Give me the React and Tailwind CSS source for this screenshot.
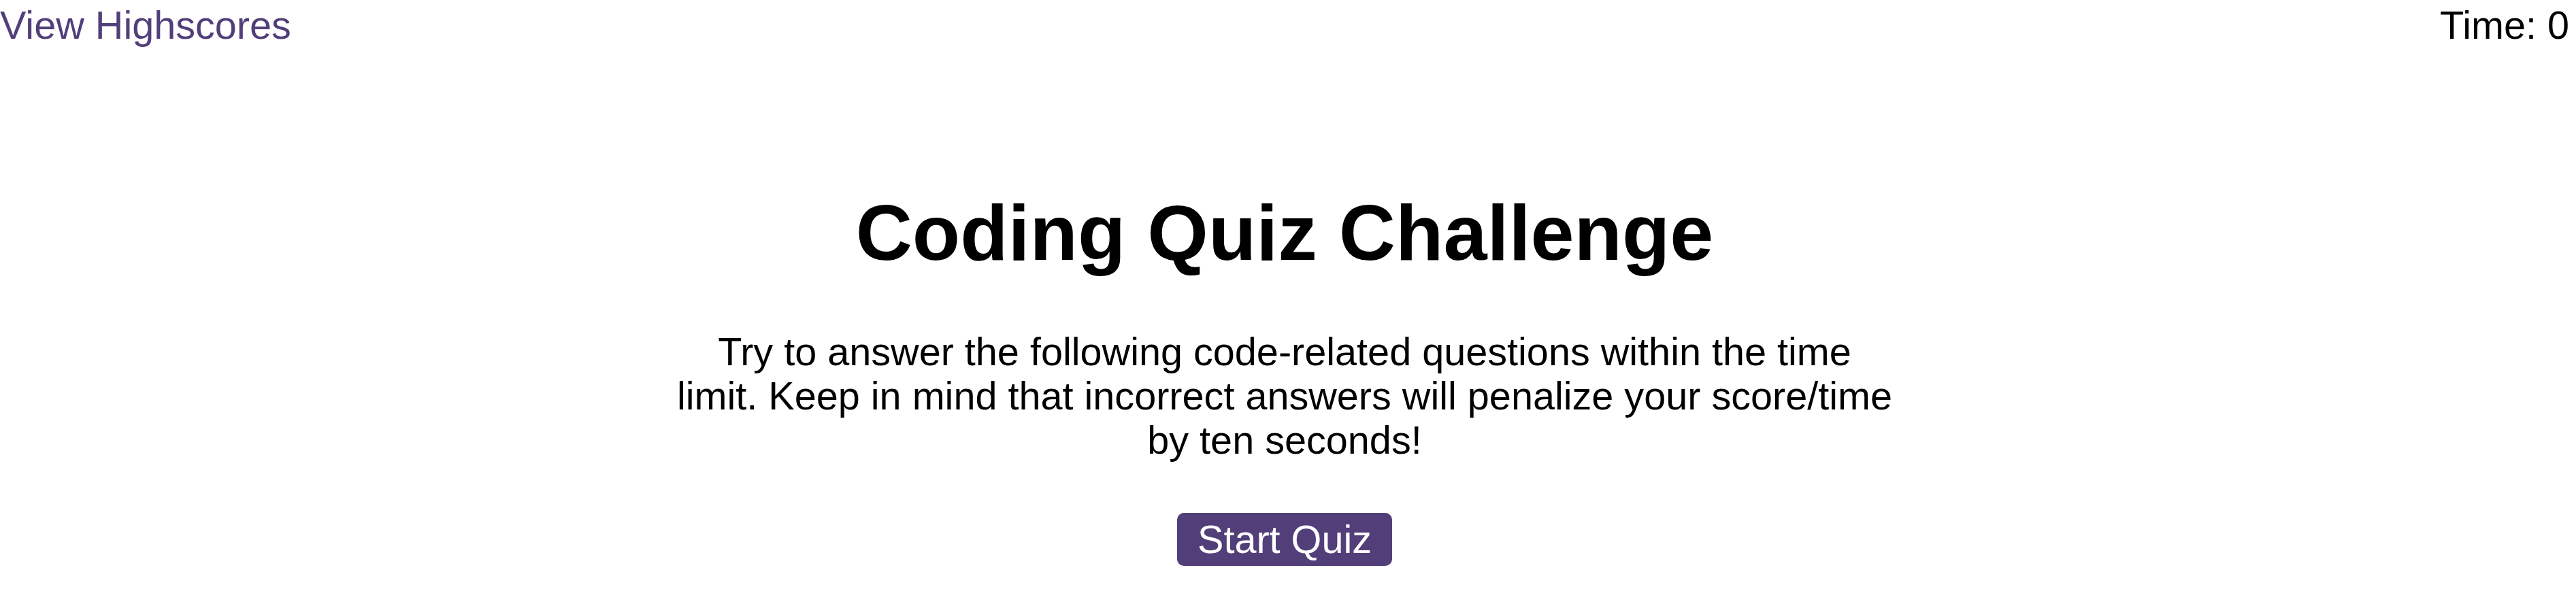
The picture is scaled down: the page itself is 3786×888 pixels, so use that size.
export default function App() {
  return (
    <div className="min-h-screen bg-white pr-[10px] text-black font-['Liberation_Sans',Arial,sans-serif]">
      <header className="flex justify-between items-start pt-[4px] text-[57.6px] leading-[66px]">
        <a href="#" className="text-[#523f7a]">
          View Highscores
        </a>
        <div>Time: 0</div>
      </header>

      <main className="flex flex-col items-center text-center mt-[206px]">
        <h1 className="text-[115.2px] leading-[132px] font-bold">Coding Quiz Challenge</h1>
        <p className="w-[1795px] mt-[77px] text-[57.6px] leading-[65px]">
          Try to answer the following code-related questions within the time limit. Keep in mind that
          incorrect answers will penalize your score/time by ten seconds!
        </p>
        <button className="mt-[74px] bg-[#523f7a] text-white text-[57.6px] leading-[66px] px-[30px] py-[6px] rounded-[10px]">
          Start Quiz
        </button>
      </main>
    </div>
  );
}
